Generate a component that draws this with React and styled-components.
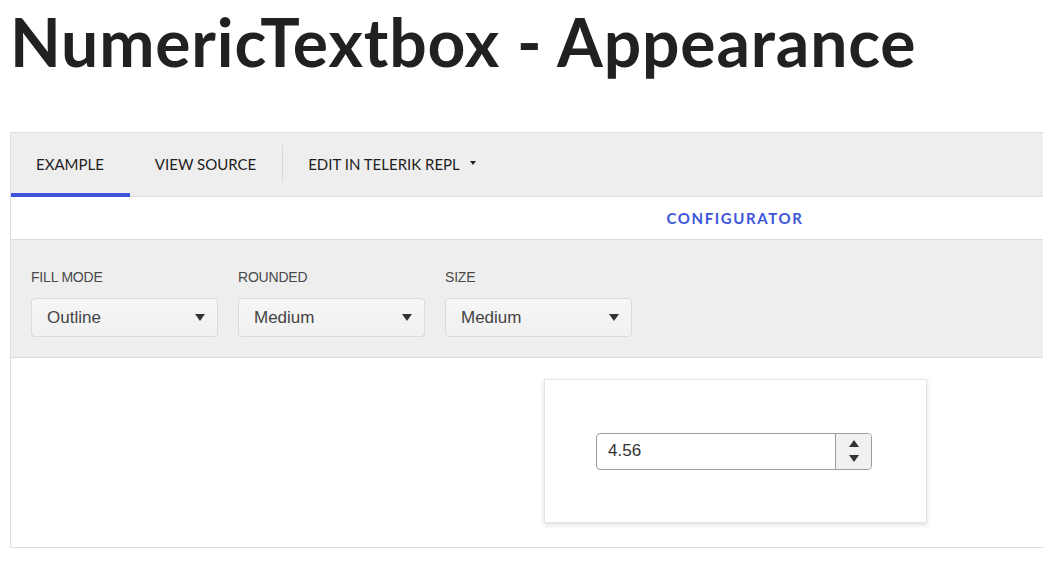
import styled, { createGlobalStyle } from "styled-components";

const GlobalStyle = createGlobalStyle`
  html, body {
    margin: 0;
    padding: 0;
    overflow: hidden;
    background: #fff;
  }
  body {
    font-family: "Lato", "Liberation Sans", sans-serif;
    color: #212121;
  }
`;

const Page = styled.div`
  padding: 0 0 0 10px;
`;

const Title = styled.h1`
  margin: 0;
  padding-top: 2px;
  font-size: 66px;
  line-height: 80px;
  font-weight: 700;
  color: #212121;
  letter-spacing: 0.85px;
`;

const Demo = styled.div`
  margin-top: 50px;
  width: 1448px;
  border: 1px solid #dedede;
`;

const TabBar = styled.div`
  display: flex;
  align-items: stretch;
  height: 63px;
  background: #eeeeee;
  border-bottom: 1px solid #dcdcdc;
`;

const Tab = styled.div`
  position: relative;
  display: flex;
  align-items: center;
  gap: 10px;
  padding: 0 26px 2px 25px;
  font-size: 15px;
  font-weight: 400;
  color: #1d1d1d;
  &::after {
    content: "";
    position: absolute;
    left: 0;
    right: 0;
    bottom: -1px;
    height: 4px;
    background: ${(p) => (p.active ? "#3d55d9" : "transparent")};
  }
`;

const Divider = styled.div`
  width: 1px;
  background: #d8d8d8;
  margin: 12px 0 14px;
`;

const SmallCaret = styled.span`
  width: 0;
  height: 0;
  border-left: 3px solid transparent;
  border-right: 3px solid transparent;
  border-top: 4px solid #222;
  margin-top: -2px;
`;

const ConfigRow = styled.div`
  height: 42px;
  display: flex;
  align-items: center;
  justify-content: center;
  border-bottom: 1px solid #dcdcdc;
  font-size: 15px;
  font-weight: 700;
  letter-spacing: 1.6px;
  color: #3d55d9;
`;

const Options = styled.div`
  display: flex;
  gap: 20px;
  height: 118px;
  padding: 29px 20px 0;
  box-sizing: border-box;
  background: #eeeeee;
  border-bottom: 1px solid #dcdcdc;
`;

const Field = styled.div`
  display: flex;
  flex-direction: column;
  gap: 13px;
  width: 187px;
`;

const Label = styled.label`
  font-family: "Liberation Sans", Arial, sans-serif;
  font-size: 14px;
  line-height: 16px;
  color: #4a4a4a;
  letter-spacing: -0.2px;
`;

const Select = styled.div`
  display: flex;
  align-items: center;
  justify-content: space-between;
  height: 39px;
  box-sizing: border-box;
  padding: 0 12px 0 15px;
  border: 1px solid #dadada;
  border-radius: 4px;
  background: linear-gradient(#f6f6f6, #f1f1f1);
  font-family: "Liberation Sans", Arial, sans-serif;
  font-size: 17px;
  color: #444;
`;

const Caret = styled.span`
  width: 0;
  height: 0;
  border-left: 5px solid transparent;
  border-right: 5px solid transparent;
  border-top: 7px solid #333;
`;

const Stage = styled.div`
  height: 189px;
  display: flex;
  justify-content: center;
  align-items: flex-start;
  padding-top: 21px;
  box-sizing: border-box;
`;

const Card = styled.div`
  width: 383px;
  height: 144px;
  box-sizing: border-box;
  background: #fff;
  border: 1px solid #e4e4e4;
  box-shadow: 0 2px 5px rgba(0, 0, 0, 0.13);
  display: flex;
  align-items: center;
  justify-content: center;
`;

const NumericBox = styled.div`
  display: flex;
  width: 276px;
  height: 37px;
  box-sizing: border-box;
  border: 1px solid #9d9d9d;
  border-radius: 4px;
  overflow: hidden;
  margin-left: -2px;
`;

const NumericInput = styled.div`
  flex: 1;
  display: flex;
  align-items: center;
  padding-left: 11px;
  font-family: "Liberation Sans", Arial, sans-serif;
  font-size: 17px;
  color: #333;
`;

const Spinner = styled.div`
  width: 35px;
  display: flex;
  flex-direction: column;
  border-left: 1px solid #9d9d9d;
  background: #f1f1f1;
`;

const SpinButton = styled.div`
  flex: 1;
  display: flex;
  align-items: center;
  justify-content: center;
  &::before {
    content: "";
    width: 0;
    height: 0;
    border-left: 5px solid transparent;
    border-right: 5px solid transparent;
    ${(p) => (p.up ? "border-bottom: 7px solid #333; margin-top: 3px;" : "border-top: 7px solid #333; margin-bottom: 3px;")}
  }
`;

const fields = [
  { label: "FILL MODE", value: "Outline" },
  { label: "ROUNDED", value: "Medium" },
  { label: "SIZE", value: "Medium" },
];

export default function App() {
  return (
    <Page>
      <GlobalStyle />
      <Title>NumericTextbox - Appearance</Title>
      <Demo>
        <TabBar>
          <Tab active>EXAMPLE</Tab>
          <Tab>VIEW SOURCE</Tab>
          <Divider />
          <Tab>
            EDIT IN TELERIK REPL <SmallCaret />
          </Tab>
        </TabBar>
        <ConfigRow>CONFIGURATOR</ConfigRow>
        <Options>
          {fields.map((f) => (
            <Field key={f.label}>
              <Label>{f.label}</Label>
              <Select>
                {f.value}
                <Caret />
              </Select>
            </Field>
          ))}
        </Options>
        <Stage>
          <Card>
            <NumericBox>
              <NumericInput>4.56</NumericInput>
              <Spinner>
                <SpinButton up />
                <SpinButton />
              </Spinner>
            </NumericBox>
          </Card>
        </Stage>
      </Demo>
    </Page>
  );
}
